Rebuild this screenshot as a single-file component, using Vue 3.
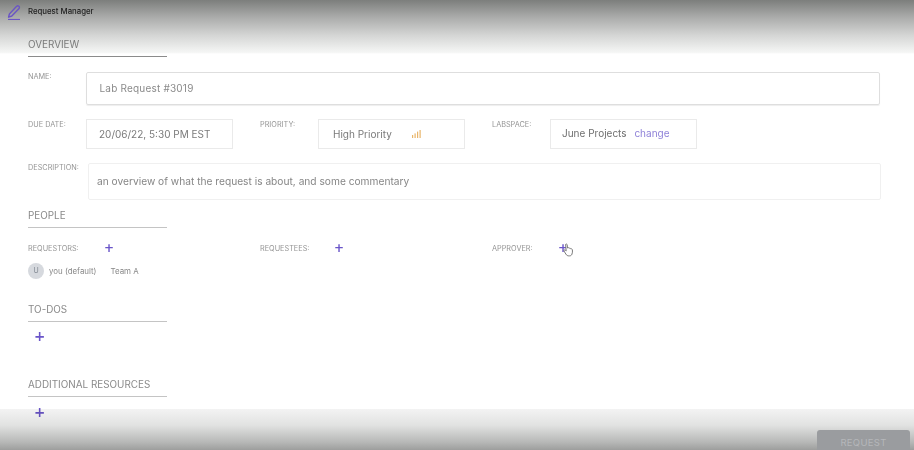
<template>
  <div class="page">
    <header class="topbar">
      <svg class="logo" width="14" height="17" viewBox="0 0 14 17" fill="none">
        <path d="M2.4 11 L9.4 3.6 C10.2 2.7 11.2 2.6 11.9 3.2 C12.6 3.9 12.6 4.9 11.8 5.7 L4.8 13 L1.6 14.2 Z" stroke="#6a55c4" stroke-width="1.4" stroke-linejoin="round" />
        <path d="M1 16.5 H13" stroke="#6a55c4" stroke-width="1.2" />
      </svg>
      <span class="app-name">Request Manager</span>
    </header>

    <main class="content">
      <h2 class="section-title overview">OVERVIEW</h2>

      <div class="name-row">
        <label class="field-label name-label">NAME:</label>
        <div class="box name-box">Lab Request #3019</div>
      </div>

      <div class="meta-row">
        <div class="meta-col">
          <label class="field-label date-label">DUE DATE:</label>
          <div class="box meta-box date-box">20/06/22, 5:30 PM EST</div>
        </div>
        <div class="meta-col">
          <label class="field-label priority-label">PRIORITY:</label>
          <div class="box meta-box priority-box">
            High Priority
            <svg class="bars" width="9" height="8" viewBox="0 0 9 8">
              <rect x="0" y="5" width="1.2" height="3" fill="#e9b56a" />
              <rect x="2.5" y="3.4" width="1.2" height="4.6" fill="#e9b56a" />
              <rect x="5" y="1.6" width="1.2" height="6.4" fill="#e9b56a" />
              <rect x="7.5" y="0" width="1.2" height="8" fill="#e9b56a" />
            </svg>
          </div>
        </div>
        <div class="meta-col">
          <label class="field-label space-label">LABSPACE:</label>
          <div class="box meta-box space-box">
            June Projects
            <a class="change">change</a>
          </div>
        </div>
      </div>

      <div class="desc-row">
        <label class="field-label desc-label">DESCRIPTION:</label>
        <div class="box desc-box">an overview of what the request is about, and some commentary</div>
      </div>

      <h2 class="section-title people">PEOPLE</h2>

      <div class="people-row">
        <div class="people-col">
          <span class="field-label req-label">REQUESTORS:</span>
          <span class="plus small">+</span>
        </div>
        <div class="people-col">
          <span class="field-label reqee-label">REQUESTEES:</span>
          <span class="plus small">+</span>
        </div>
        <div class="people-col">
          <span class="field-label appr-label">APPROVER:</span>
          <span class="plus small">+</span>
          <svg class="cursor" width="11" height="14" viewBox="0 0 11 14" fill="#fff">
            <path d="M2.6 1.4 C3.2 .7 4 1 4.2 1.8 L4.5 5 C5 4.5 5.9 4.6 6.2 5.2 C6.8 4.9 7.5 5.2 7.7 5.8 C8.4 5.6 9.3 6 9.4 6.9 C9.6 8.4 9.5 10 8.9 11.3 C8.5 12.3 7.7 12.9 6.4 12.9 C4.6 13 3.6 12.3 2.8 11 L1 8 C.6 7.3 1.4 6.5 2.2 7 L3.2 7.9 Z" stroke="#6c6c6c" stroke-width=".9" stroke-linejoin="round" />
          </svg>
        </div>
      </div>

      <div class="person">
        <span class="avatar">U</span>
        <span class="person-name">you (default)</span>
        <span class="person-team">Team A</span>
      </div>

      <h2 class="section-title todos">TO-DOS</h2>
      <span class="plus large">+</span>

      <h2 class="section-title resources">ADDITIONAL RESOURCES</h2>
      <span class="plus large">+</span>
    </main>

    <div class="fade fade-top"></div>
    <div class="fade fade-bottom"></div>
    <button class="request-btn">REQUEST</button>
  </div>
</template>

<script setup>
</script>

<style>
html,
body {
  margin: 0;
  background: #fff;
}
</style>

<style scoped>
.page {
  position: relative;
  width: 914px;
  height: 450px;
  overflow: hidden;
  background: #fff;
  font-family: Inter, "Noto Sans", sans-serif;
  color: #7b7b7b;
}

.topbar {
  position: relative;
  z-index: 3;
  display: flex;
  align-items: center;
  height: 22px;
  padding-left: 7px;
  filter: blur(.3px);
}

.logo {
  margin-right: 7px;
}

.app-name {
  font-size: 7.8px;
  font-weight: 500;
  color: #222;
}

.content {
  padding: 16px 33px 0 28px;
  filter: blur(.35px);
}

.section-title {
  width: 139px;
  margin: 0;
  padding-bottom: 6px;
  border-bottom: 1px solid #c4c4c4;
  font-size: 9.9px;
  font-weight: 400;
  line-height: 12px;
  white-space: nowrap;
  color: #8a8a8a;
}

.overview {
  border-bottom-color: #8b8b8b;
}

.field-label {
  font-size: 7.3px;
  line-height: 9px;
  color: #959595;
  white-space: nowrap;
}

.box {
  box-sizing: border-box;
  border: 1px solid #eaeaea;
  color: #7a7a7a;
  font-size: 10px;
}

.name-row {
  display: flex;
  margin-top: 15px;
}

.name-label {
  width: 58px;
}

.name-box {
  width: 794px;
  height: 33px;
  padding-left: 12.5px;
  line-height: 31px;
  border-color: #dedede;
  border-radius: 2px;
  box-shadow: 0 1px 1px #eee;
  letter-spacing: .2px;
  color: #8a8a8a;
}

.meta-row {
  display: flex;
  margin-top: 14px;
}

.meta-col {
  display: flex;
  width: 232px;
}

.meta-col label {
  padding-top: 1px;
}

.date-label {
  width: 58px;
}

.priority-label {
  width: 58px;
}

.space-label {
  width: 58px;
}

.meta-box {
  width: 147px;
  height: 30px;
  line-height: 28px;
  padding-left: 12px;
  white-space: nowrap;
}

.priority-box {
  padding-left: 14px;
}

.bars {
  margin-left: 17px;
}

.space-box {
  padding-left: 11px;
  color: #6f6f6f;
  line-height: 26px;
}

.change {
  margin-left: 5px;
  color: #8f82d8;
}

.desc-row {
  display: flex;
  margin-top: 14px;
}

.desc-label {
  width: 60px;
}

.desc-box {
  width: 793px;
  height: 37px;
  padding-left: 8px;
  line-height: 34px;
  border-color: #f0f0f0;
  border-radius: 2px;
  font-size: 10.2px;
  color: #868686;
}

.people {
  margin-top: 9px;
}

.people-row {
  display: flex;
  margin-top: 15px;
}

.people-col {
  position: relative;
  display: flex;
  align-items: center;
  width: 232px;
  height: 10px;
}

.req-label {
  width: 76px;
}

.reqee-label {
  width: 74px;
}

.appr-label {
  width: 66px;
}

.plus {
  color: #6a55c9;
  font-weight: 700;
  font-family: "DejaVu Sans", sans-serif;
}

.plus.small {
  font-size: 12px;
  line-height: 10px;
}

.plus.large {
  display: block;
  width: 12px;
  margin: 8px 0 0 6px;
  font-size: 13.5px;
  line-height: 12px;
}

.resources + .plus.large {
  margin-top: 9px;
}

.cursor {
  position: absolute;
  left: 71px;
  top: 0;
}

.person {
  display: flex;
  align-items: center;
  margin-top: 10px;
  font-size: 7.9px;
  color: #888;
}

.avatar {
  width: 16px;
  height: 16px;
  margin-right: 5px;
  border-radius: 50%;
  background: #d6d9de;
  color: #7f8690;
  font-size: 7px;
  line-height: 16px;
  text-align: center;
}

.person-team {
  margin-left: 14px;
}

.todos {
  margin-top: 24px;
}

.resources {
  margin-top: 36px;
}

.fade {
  position: absolute;
  left: 0;
  right: 0;
  pointer-events: none;
  z-index: 2;
}

.fade-top {
  top: 0;
  height: 54px;
  background: linear-gradient(to bottom, #7c7e7c 0%, #a8a9a8 30%, #d4d5d4 65%, #f5f6f5 97%, #fff 100%);
  mix-blend-mode: multiply;
}

.fade-bottom {
  bottom: 0;
  height: 41px;
  background: linear-gradient(to bottom, #f3f3f3 0%, #e1e2e1 40%, #b8b9b8 80%, #9d9e9d 100%);
  mix-blend-mode: multiply;
}

.request-btn {
  position: absolute;
  right: 4px;
  bottom: 0;
  z-index: 3;
  width: 93px;
  height: 20px;
  padding: 5px 0 0;
  border: none;
  border-radius: 3px 3px 0 0;
  background: #9a9c9f;
  color: #b5b7ba;
  font-family: inherit;
  font-size: 9.5px;
  letter-spacing: .3px;
}
</style>
